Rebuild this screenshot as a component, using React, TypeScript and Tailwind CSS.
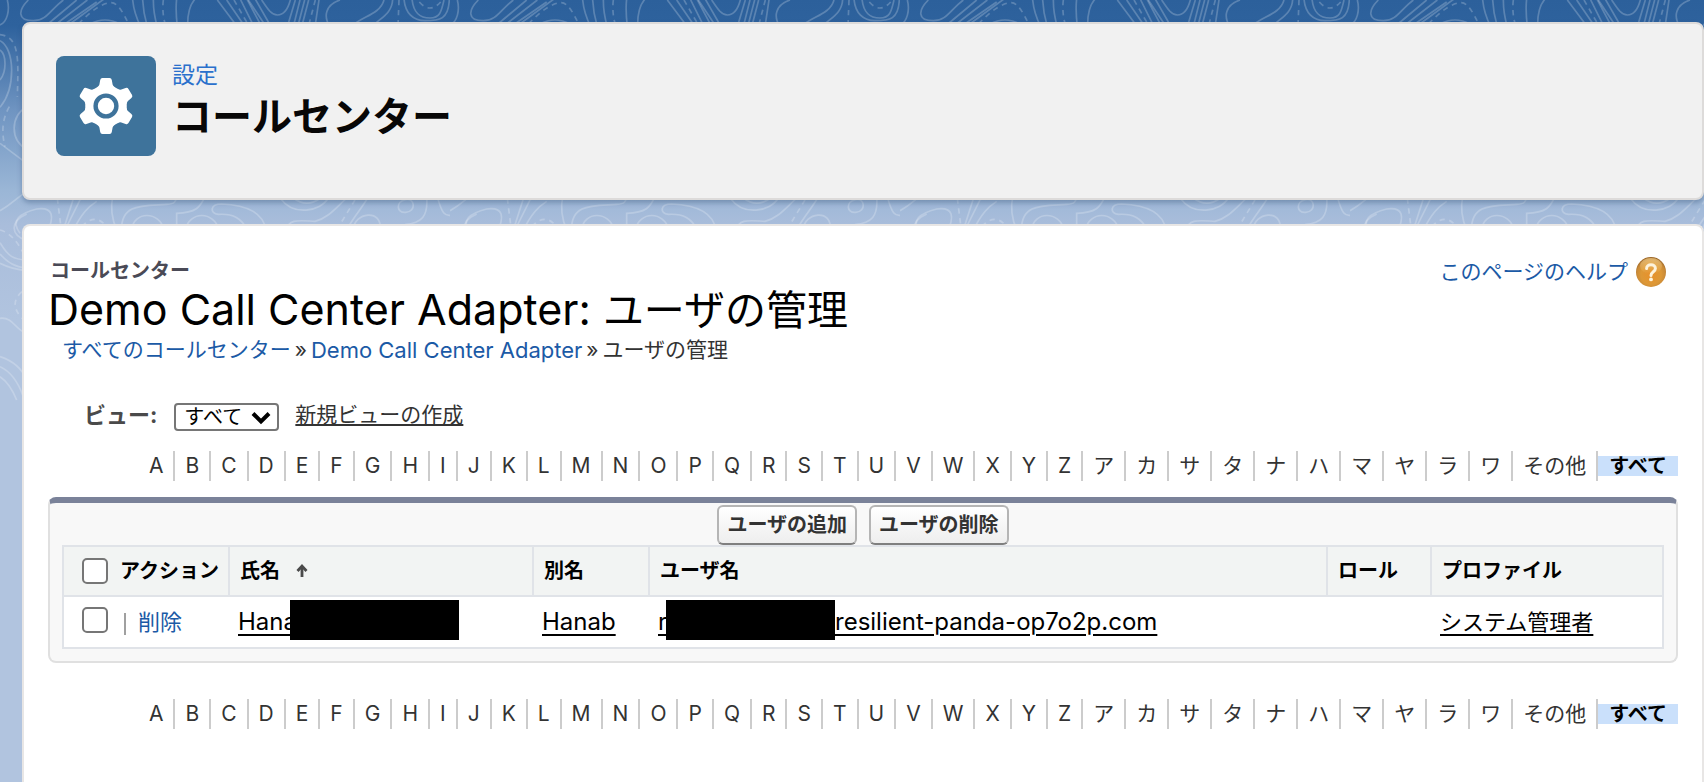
import type { ReactNode } from 'react';

const LETTERS = [
  ...'ABCDEFGHIJKLMNOPQRSTUVWXYZ'.split(''),
  ...'アカサタナハマヤラワ'.split(''),
  'その他',
];

const TOPO_SOLID = [
  // top band
  'M22 0C30 30 22 66 0 75',
  'M85 0C55 30 50 62 100 62C140 62 150 30 190 0',
  'M230 0L140 75M262 0L165 75M290 6L190 75M316 -6L205 75',
  'M270 72Q315 48 360 72',
  'M398 0Q402 40 422 80M428 0Q430 40 442 80M460 0Q460 40 472 80M530 -4Q526 30 532 80',
  'M563 80C562 40 570 10 590 -8',
  'M652 0L712 80M680 0L735 80M722 0L762 80M738 -8L785 80',
  'M745 0L795 75M785 0C805 30 815 45 832 45C850 45 864 30 872 -4',
  'M765 -4L812 78M886 0L862 80M900 0L880 80M914 0L893 80M926 0L905 80M957 0L945 80',
  'M1020 0C975 15 970 50 990 80M1152 0C1140 45 1080 50 1055 80M1178 -4C1178 40 1140 55 1120 76',
  'M1212 -4C1215 40 1240 62 1275 62C1320 62 1345 58 1348 0M1236 -4C1240 40 1260 54 1290 54C1320 54 1324 35 1332 0',
  // band between the cards
  'M60 700C30 660 60 640 110 627C160 620 165 650 140 700',
  'M245 590L195 690M222 590L190 690M290 604C265 620 245 640 220 690',
  'M338 590Q328 640 350 690M365 690C362 610 430 618 500 613C525 612 527 605 530 590',
  'M395 690C400 632 480 632 492 690M530 690L530 640C590 638 600 620 612 596',
  'M555 690C570 632 640 632 658 690',
  'M798 690C790 640 740 615 665 612C630 612 628 640 655 643C700 640 725 655 742 690',
  'M842 596C880 648 960 636 985 594M880 594Q920 625 962 594',
  'M860 690C865 655 900 662 945 664C985 655 1010 620 1045 590',
  'M1040 690C1060 650 1090 620 1105 590M1060 690C1060 636 1150 625 1140 690',
  'M1217 599C1245 592 1250 635 1217 637C1190 640 1185 605 1217 599',
  'M1280 590C1285 650 1265 668 1215 674M1312 590C1325 640 1335 650 1355 645C1380 640 1380 605 1425 590',
  // left gutter
  'M0 122C45 145 48 265 0 322M0 150C20 165 20 215 0 240',
  'M80 320C30 350 30 420 80 448M0 430L80 490M0 632C40 610 40 600 80 575',
  'M80 642C30 665 30 705 80 722M0 728C25 770 40 778 80 780M0 762C25 790 45 800 80 805M0 790Q35 808 80 812',
  'M0 955C40 950 45 990 80 1000M0 1070Q60 1090 80 1140M0 1100Q45 1120 70 1190M0 1130Q30 1150 50 1200',
];

const TOPO_DASHED = [
  'M235 72C275 30 310 8 333 8C355 8 370 40 388 76',
  'M490 0Q485 40 498 80M702 0L748 80M946 0L925 80M1197 0L1194 80',
  'M1258 6Q1290 42 1322 6',
  'M172 595L184 690M245 680Q285 636 320 680M1010 690L1065 600',
  'M0 104C60 110 55 180 52 290M28 320C5 360 5 400 15 440M0 690Q40 700 70 760M66 875Q25 910 66 955',
];

function Backdrop() {
  return (
    <div className="absolute inset-0 bg-[#b1c4df] bg-[linear-gradient(to_bottom,#2c609b_0px,#2e629d_26px,#6f94c1_110px,#9ab6d6_190px,#a9bddb_225px,#b1c4df_320px)]">
      <svg className="h-[460px] w-full" aria-hidden="true">
        <defs>
          <pattern id="topo" width="450" height="460" patternUnits="userSpaceOnUse">
            <g transform="scale(0.33333)" fill="none" stroke="#ffffff" strokeOpacity="0.22" strokeWidth="5">
              {TOPO_SOLID.map((d) => (
                <path key={d} d={d} />
              ))}
              <g strokeDasharray="16 14">
                {TOPO_DASHED.map((d) => (
                  <path key={d} d={d} />
                ))}
              </g>
            </g>
          </pattern>
        </defs>
        <rect width="100%" height="100%" fill="url(#topo)" />
      </svg>
    </div>
  );
}

function GearIcon() {
  return (
    <svg viewBox="-50 -50 100 100" className="size-full" aria-hidden="true">
      <g fill="#ffffff">
        <circle r="20.8" />
        {[0, 60, 120, 180, 240, 300].map((a) => (
          <path
            key={a}
            transform={`rotate(${a})`}
            d="M-3.6 -28H3.6Q5.4 -28 5.8 -26L6.6 -21.5Q7 -20 9 -18.5L0 -10L-9 -18.5Q-7 -20 -6.6 -21.5L-5.8 -26Q-5.4 -28 -3.6 -28Z"
          />
        ))}
      </g>
      <circle r="10.4" fill="none" stroke="#3e739b" strokeWidth="4.4" />
    </svg>
  );
}

function HelpIcon() {
  return (
    <svg viewBox="0 0 30 30" className="size-[30px]" aria-hidden="true">
      <defs>
        <radialGradient id="help" cx="50%" cy="58%" r="56%">
          <stop offset="0" stopColor="#e8902a" />
          <stop offset="0.6" stopColor="#dd9836" />
          <stop offset="0.85" stopColor="#c98a38" />
          <stop offset="1" stopColor="#9c6626" />
        </radialGradient>
        <linearGradient id="shine" x1="0" y1="0" x2="0" y2="1">
          <stop offset="0" stopColor="#ffe2a0" stopOpacity="0.55" />
          <stop offset="1" stopColor="#ffe2a0" stopOpacity="0" />
        </linearGradient>
      </defs>
      <circle cx="15" cy="15" r="15" fill="url(#help)" />
      <ellipse cx="15" cy="9" rx="11" ry="8" fill="url(#shine)" />
      <path
        d="M10.6 11.6C10.6 6.4 19.4 6.4 19.4 11.6C19.4 15 15 14.6 15 18.6"
        fill="none"
        stroke="#fdf3dc"
        strokeWidth="3"
        strokeLinecap="round"
      />
      <circle cx="15" cy="22.4" r="1.9" fill="#fdf3dc" />
    </svg>
  );
}

function AlphabetBar() {
  return (
    <nav className="flex h-[30px] items-center justify-end text-[21px] leading-[30px] text-[#333333]">
      {LETTERS.map((l) => (
        <a key={l} href="#filter" className="border-r-2 border-[#cccccc] px-[10px]">
          {l}
        </a>
      ))}
      <a href="#filter" className="bg-[#cae0fb] px-[11px] text-[20px] leading-[20px] font-bold text-black">
        すべて
      </a>
    </nav>
  );
}

function ActionButton({ children }: { children: ReactNode }) {
  return (
    <button
      type="button"
      className="h-10 rounded-md border-2 border-[#b5b5b5] border-b-[#7f7f7f] bg-linear-to-b from-white to-[#eeeeee] px-2 text-[20px] leading-[34px] font-bold text-[#333333]"
    >
      {children}
    </button>
  );
}

function Checkbox({ label }: { label: string }) {
  return (
    <input
      type="checkbox"
      aria-label={label}
      className="size-[26px] shrink-0 appearance-none rounded-[5px] border-2 border-[#767676] bg-white checked:bg-[#1f5fa8]"
    />
  );
}

function Masked() {
  return <span className="h-10 w-[169px] shrink-0 bg-black" />;
}

function HeadCell({ width, children }: { width: string; children: ReactNode }) {
  return (
    <th scope="col" className={`${width} border-r-2 border-[#e0e3e8] px-[10px] text-left`}>
      {children}
    </th>
  );
}

export default function App() {
  return (
    <div className="relative min-h-screen bg-[#b1c4df] font-[Inter,'Noto_Sans_CJK_JP',sans-serif] text-black">
      <Backdrop />
      <div className="relative flex min-h-screen flex-col gap-6 pt-[22px] pl-[22px]">
        <header className="flex gap-4 rounded-lg border-2 border-[#dddbda] bg-[#f1f1f1] px-8 pt-8 pb-[42px] shadow-[0_3px_5px_rgba(40,70,110,0.35)]">
          <div className="size-[100px] rounded-lg bg-[#3e739b]">
            <GearIcon />
          </div>
          <div className="pt-1">
            <a href="#setup" className="block text-[23px] leading-[30px] text-[#2a70cc]">
              設定
            </a>
            <h1 className="text-[40px] leading-[54px] font-bold text-[#080707]">コールセンター</h1>
          </div>
        </header>

        <main className="flex-1 rounded-t-lg border-2 border-b-0 border-[#e8e6e5] bg-white px-6 pt-8">
          <div className="flex items-start justify-between">
            <div>
              <p className="pl-[2px] text-[20px] leading-[26px] font-bold text-[#4a4a56]">コールセンター</p>
              <h2 className="text-[43px] leading-[50px]">
                Demo Call Center Adapter: <span className="text-[41px]">ユーザの管理</span>
              </h2>
            </div>
            <a href="#help" className="-mt-px flex items-center gap-2 pr-3 text-[21px] leading-[26px] text-[#1b5aa6]">
              このページのヘルプ
              <HelpIcon />
            </a>
          </div>

          <nav className="flex gap-1 pl-[14px] text-[21px] leading-[30px] text-[#333333]">
            <a href="#all" className="text-[#1b5aa6]">
              すべてのコールセンター
            </a>
            <span>»</span>
            <a href="#adapter" className="text-[22px] text-[#1b5aa6]">
              Demo Call Center Adapter
            </a>
            <span>»</span>
            <span>ユーザの管理</span>
          </nav>

          <div className="mt-[37px] flex h-[30px] items-center pl-9 text-[21px] leading-[26px] text-[#333333]">
            <label htmlFor="view" className="pb-1 text-[22px] font-bold text-[#4a4a4a]">
              ビュー:
            </label>
            <span className="relative ml-[17px] flex">
              <select
                id="view"
                className="h-7 w-[105px] appearance-none rounded-[4px] border-2 border-[#767676] bg-white pl-2 text-[20px] leading-6 text-black"
              >
                <option>すべて</option>
              </select>
              <svg viewBox="0 0 20 14" className="pointer-events-none absolute top-2 right-2 h-[14px] w-5" aria-hidden="true">
                <path d="M2 2.5L10 10.5L18 2.5" fill="none" stroke="#000000" strokeWidth="4" />
              </svg>
            </span>
            <a href="#new-view" className="ml-4 pb-1 underline decoration-2 underline-offset-2">
              新規ビューの作成
            </a>
          </div>

          <div className="mt-[19px]">
            <AlphabetBar />
          </div>

          <section className="mt-4 rounded-lg border-2 border-t-6 border-[#e0e0e0] border-t-[#7a8299] bg-[#f8f8f8] px-3 pt-[2px] pb-3">
            <div className="flex justify-center gap-3">
              <ActionButton>ユーザの追加</ActionButton>
              <ActionButton>ユーザの削除</ActionButton>
            </div>
            <table className="w-full table-fixed border-separate border-spacing-0 border-2 border-[#e0e3e8] bg-white">
              <thead>
                <tr className="h-[50px] bg-[#f2f4f3] text-[20px] leading-7 [&>th]:border-b-2 [&>th:last-child]:border-r-0">
                  <HeadCell width="w-[166px]">
                    <span className="flex items-center gap-3 pl-2 whitespace-nowrap">
                      <Checkbox label="すべて選択" />
                      アクション
                    </span>
                  </HeadCell>
                  <HeadCell width="w-[304px]">
                    <span className="flex items-center gap-4">
                      氏名
                      <svg viewBox="0 0 12 16" className="h-4 w-3" aria-hidden="true">
                        <path d="M6 14V4" fill="none" stroke="#4a4a4a" strokeWidth="2.8" />
                        <path d="M1.5 8L6 3L10.5 8" fill="none" stroke="#4a4a4a" strokeWidth="2.8" />
                      </svg>
                    </span>
                  </HeadCell>
                  <HeadCell width="w-[116px]">別名</HeadCell>
                  <HeadCell width="w-auto">ユーザ名</HeadCell>
                  <HeadCell width="w-[104px]">ロール</HeadCell>
                  <HeadCell width="w-[230px]">プロファイル</HeadCell>
                </tr>
              </thead>
              <tbody>
                <tr className="h-[50px] text-[24px] leading-[44px] [&>td]:px-2 [&>td]:pt-[3px] [&>td]:align-top [&_a]:underline-offset-4">
                  <td>
                    <span className="flex h-10 items-center pl-[10px] text-[22px]">
                      <Checkbox label="選択" />
                      <span className="mt-2 ml-4 h-[22px] w-[2px] bg-[#a0a0a0]" />
                      <a href="#remove" className="ml-3 pt-1 text-[#1b5aa6]">
                        削除
                      </a>
                    </span>
                  </td>
                  <td>
                    <span className="flex h-10">
                      <a href="#user" className="-mr-[7px] underline decoration-2">
                        Hana
                      </a>
                      <Masked />
                    </span>
                  </td>
                  <td>
                    <a href="#user" className="block h-10 underline decoration-2">
                      Hanab
                    </a>
                  </td>
                  <td>
                    <span className="flex h-10">
                      <a href="#user" className="w-2 overflow-hidden underline decoration-2">
                        r
                      </a>
                      <Masked />
                      <a href="#user" className="underline decoration-2">
                        resilient-panda-op7o2p.com
                      </a>
                    </span>
                  </td>
                  <td />
                  <td>
                    <a href="#profile" className="block h-10 text-[22px] underline decoration-2">
                      システム管理者
                    </a>
                  </td>
                </tr>
              </tbody>
            </table>
          </section>

          <div className="mt-9">
            <AlphabetBar />
          </div>
        </main>
      </div>
    </div>
  );
}
